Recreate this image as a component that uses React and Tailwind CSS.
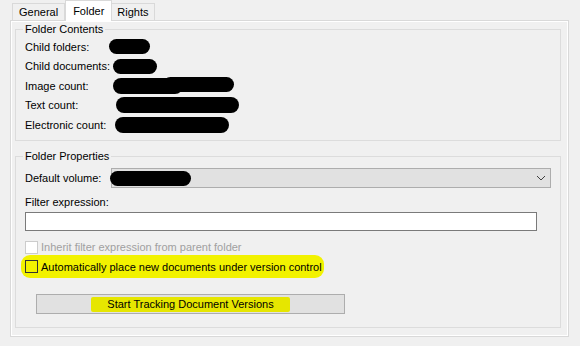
import React from 'react';

// redacted value in the screenshot: a black marker stroke
const Blob = ({ className }) => <div className={`bg-black rounded-full shrink-0 ${className}`} />;

const CountRow = ({ label, children }) => (
  <div className="flex items-center h-[19.5px]">
    <span className="w-[84px] shrink-0 whitespace-nowrap">{label}</span>
    {children}
  </div>
);

export default function App() {
  return (
    <div
      className="w-[580px] h-[346px] bg-[#f0f0f0] text-[11px] leading-[14px] text-black overflow-hidden"
      style={{ fontFamily: '"Liberation Sans", Arial, sans-serif' }}
    >
      {/* tabs */}
      <div className="flex items-end h-[20px] pl-[12px]">
        <div className="h-[17px] px-[6px] border border-b-0 border-[#d9d9d9] bg-[#f0f0f0] flex items-center">General</div>
        <div className="h-[21px] -mb-[1px] px-[7px] border border-b-0 border-[#d9d9d9] bg-white flex items-center relative z-10">Folder</div>
        <div className="h-[17px] px-[5px] border border-b-0 border-l-0 border-[#d9d9d9] bg-[#f0f0f0] flex items-center">Rights</div>
      </div>

      {/* tab page */}
      <div className="ml-[10px] w-[559px] h-[317px] border border-[#d9d9d9] bg-[#f0f0f0] shadow-[inset_0_0_0_1px_#ffffff] px-[4px] pt-[1px]">
        <fieldset className="w-[546px] h-[119px] border border-[#dcdcdc] px-[9px]">
          <legend className="ml-[-2px] px-[2px] leading-[14px]">Folder Contents</legend>
          <div className="pt-[1px]">
            <CountRow label="Child folders:">
              <Blob className="w-[41px] h-[15px]" />
            </CountRow>
            <CountRow label="Child documents:">
              <Blob className="ml-[4px] w-[44px] h-[15px]" />
            </CountRow>
            <CountRow label="Image count:">
              <div className="relative ml-[4px] w-[121px] h-[17px]">
                <Blob className="absolute left-0 top-[1px] w-[70px] h-[16px]" />
                <Blob className="absolute left-[50px] top-0 w-[71px] h-[15px]" />
              </div>
            </CountRow>
            <CountRow label="Text count:">
              <Blob className="ml-[7px] w-[123px] h-[16px]" />
            </CountRow>
            <CountRow label="Electronic count:">
              <Blob className="ml-[6px] w-[114px] h-[16px]" />
            </CountRow>
          </div>
        </fieldset>

        <fieldset className="mt-[8px] w-[546px] h-[179px] border border-[#dcdcdc] pl-[9px]">
          <legend className="ml-[-2px] px-[2px] leading-[14px]">Folder Properties</legend>

          <div className="mt-[5px] flex items-center h-[20px]">
            <span className="w-[86px] shrink-0">Default volume:</span>
            <div className="w-[440px] h-[20px] bg-[#e1e1e1] border border-[#adadad] flex items-center justify-between pr-[4px]">
              <Blob className="-ml-[2px] w-[81px] h-[15px]" />
              <svg width="10" height="6" viewBox="0 0 10 6" className="text-[#404040]">
                <path d="M1 1 L5 5 L9 1" fill="none" stroke="currentColor" strokeWidth="1" />
              </svg>
            </div>
          </div>

          <div className="mt-[7px]">Filter expression:</div>
          <div className="mt-[3px] w-[512px] h-[19px] bg-white border border-[#7a7a7a]" />

          <div className="mt-[9px] flex items-center h-[14px] text-[#a0a0a0]">
            <div className="w-[13px] h-[13px] shrink-0 border border-[#cccccc] bg-white mr-[3px]" />
            <span>Inherit filter expression from parent folder</span>
          </div>

          <div className="mt-[1px] -ml-[4px] w-[303px] h-[23px] pl-[4px] bg-[#f2f200] rounded-[9px] flex items-center">
            <div className="w-[13px] h-[13px] shrink-0 border border-[#333333] bg-[#f2f200] mr-[3px]" />
            <span className="whitespace-nowrap">Automatically place new documents under version control</span>
          </div>

          <div className="mt-[16px] ml-[11px] w-[309px] h-[20px] bg-[#e1e1e1] border border-[#adadad] flex items-center justify-center">
            <span className="bg-[#e6e600] px-[16px] leading-[15px] rounded-[2px] whitespace-nowrap">Start Tracking Document Versions</span>
          </div>
        </fieldset>
      </div>
    </div>
  );
}
